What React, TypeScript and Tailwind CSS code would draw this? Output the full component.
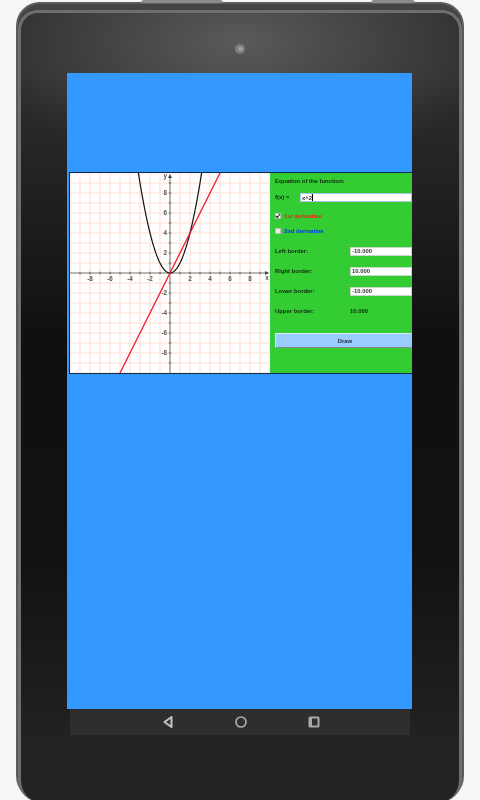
const ticks = Array.from({ length: 21 }, (_, i) => i - 10);
const labels = [-8, -6, -4, -2, 2, 4, 6, 8];

function Graph() {
  const parabola = Array.from({ length: 65 }, (_, i) => {
    const x = -3.2 + i * 0.1;
    return `${100 + x * 10},${100 - x * x * 10}`;
  }).join(" ");

  return (
    <svg viewBox="0 0 200 200" className="block w-[200px] h-[200px] shrink-0 bg-white blur-[0.35px]">
      {ticks.map((t) => (
        <g key={t} stroke="#ffe9e0" strokeWidth={1.6}>
          <line x1={100 + t * 10} y1={0} x2={100 + t * 10} y2={200} />
          <line x1={0} y1={100 + t * 10} x2={200} y2={100 + t * 10} />
        </g>
      ))}
      <line x1={0} y1={100} x2={198} y2={100} stroke="#a8a39f" strokeWidth={1.6} />
      <line x1={100} y1={3} x2={100} y2={200} stroke="#a8a39f" strokeWidth={1.6} />
      {ticks.filter((t) => t !== 0 && Math.abs(t) < 10).map((t) => (
        <g key={t} stroke="#777" strokeWidth={1.4}>
          <line x1={100 + t * 10} y1={98.8} x2={100 + t * 10} y2={101.2} />
          <line x1={98.8} y1={100 + t * 10} x2={101.2} y2={100 + t * 10} />
        </g>
      ))}
      <polygon points="100,1 98,5 102,5" fill="#444" />
      <polygon points="199,100 195,98 195,102" fill="#444" />
      <polyline points={parabola} fill="none" stroke="#111" strokeWidth={1.2} />
      <line x1={50} y1={200} x2={150} y2={0} stroke="#f01020" strokeWidth={1.2} />
      <g fontFamily="'Liberation Sans', sans-serif" fontSize={6.3} fill="#555" fontWeight={700}>
        {labels.map((n) => (
          <text key={n} x={100 + n * 10} y={108} textAnchor="middle">{n}</text>
        ))}
        {labels.map((n) => (
          <text key={n} x={97} y={102 - n * 10} textAnchor="end">{n}</text>
        ))}
        <text x={97} y={5} textAnchor="end">y</text>
        <text x={197} y={107} textAnchor="middle">x</text>
      </g>
    </svg>
  );
}

function BorderRow({ label, value }: { label: string; value: string }) {
  return (
    <div className="flex items-center h-[10px] mb-[10px]">
      <span className="w-[75px] shrink-0 text-[#102810]">{label}</span>
      <div className="flex-1 self-end h-[9px] bg-white border border-[#c8d8c8] pl-[1px] leading-[7px] text-[#333]">
        {value}
      </div>
    </div>
  );
}

function Panel() {
  return (
    <div className="flex-1 min-w-0 bg-[#33cc33] pl-[5px] pt-[3px] text-[5.9px] font-bold leading-[10px] text-[#102810] [font-family:'Liberation_Sans',sans-serif] blur-[0.25px]">
      <div className="h-[10px]">Equation of the function:</div>
      <div className="flex items-center h-[10px] mt-[6px]">
        <span className="w-[25px] shrink-0">f(x) =</span>
        <div className="flex-1 self-end h-[9px] flex items-center bg-white border border-[#a9c4e8] pl-[1px] text-[#333]">
          <span>x^2</span>
          <span className="w-px h-[7px] bg-black" />
        </div>
      </div>
      <div className="flex items-center gap-[3px] h-[10px] mt-[9px] text-[#ff1a1a]">
        <span className="flex items-center justify-center w-[6px] h-[6px] bg-white border border-[#bbb]">
          <svg viewBox="0 0 6 6" className="w-[6px] h-[6px] shrink-0">
            <path d="M1 3l1.3 1.6L5 1" fill="none" stroke="#222" strokeWidth={1.2} />
          </svg>
        </span>
        <span>1st derivative</span>
      </div>
      <div className="flex items-center gap-[3px] h-[10px] mt-[5px] text-[#0a2cff]">
        <span className="w-[6px] h-[6px] bg-[#e8e8e8] border border-[#bbb]" />
        <span>2nd derivative</span>
      </div>
      <div className="mt-[10px]">
        <BorderRow label="Left border:" value="-10.000" />
        <BorderRow label="Right border:" value="10.000" />
        <BorderRow label="Lower border:" value="-10.000" />
        <div className="flex items-center h-[10px]">
          <span className="w-[75px] shrink-0">Upper border:</span>
          <span>10.000</span>
        </div>
      </div>
      <div className="mt-[17px] h-[15px] pl-[3px] bg-[#99ccff] border border-t-[#dbe9f7] border-l-[#dbe9f7] border-r-[#99ccff] border-b-[#888] flex items-center justify-center text-[#1a2a44]">
        Draw
      </div>
    </div>
  );
}

function NavBar() {
  return (
    <div className="ml-[3px] mr-[2px] h-[26px] bg-[#2e2e2e] flex items-center">
      <svg viewBox="0 0 12 14" className="ml-[92px] w-[12px] h-[14px] shrink-0 blur-[0.3px]">
        <path d="M9.5 2v10L2.5 7z" fill="#333" stroke="#c4c4c4" strokeWidth={2} strokeLinejoin="round" />
      </svg>
      <svg viewBox="0 0 14 14" className="ml-[60px] w-[14px] h-[14px] shrink-0 blur-[0.3px]">
        <circle cx={7} cy={7} r={5} fill="none" stroke="#aaa" strokeWidth={1.7} />
      </svg>
      <svg viewBox="0 0 12 14" className="ml-[60px] w-[12px] h-[14px] shrink-0 blur-[0.3px]">
        <rect x={0.5} y={1.5} width={11} height={11} rx={1.5} fill="#a8a8a8" />
        <rect x={4} y={3.5} width={5.5} height={7} fill="#2e2e2e" />
      </svg>
    </div>
  );
}

export default function App() {
  return (
    <div className="w-[480px] h-[800px] overflow-hidden bg-[#f6f6f6]">
      <div className="flex h-[3px]">
        <div className="ml-[141px] w-[82px] h-[3px] bg-[#8a8a8a] rounded-t-sm" />
        <div className="ml-[148px] w-[44px] h-[3px] bg-[#8a8a8a] rounded-t-sm" />
      </div>
      <div className="mx-[16px] h-[798px] -mt-px rounded-t-[24px] rounded-b-[24px] bg-[#444] border-x-[2px] border-t-[2px] border-[#5c5c5c]">
        <div className="h-[792px] mt-[6px] rounded-t-[20px] rounded-b-[22px] border-x-[3px] border-t-[3px] border-[#6e6e6e] bg-[linear-gradient(180deg,transparent_0,transparent_8%,#0f0f0f_42%,#121212_70%,#222_92%,#222_100%),radial-gradient(ellipse_260px_130px_at_50%_30px,#5a5a5a,#2e2e2e)] pt-[31px] pl-[46px] pr-[47px] flex flex-col">
          <div className="ml-[168px] w-[10px] h-[10px] mb-[19px] shrink-0 rounded-full bg-[#7d7d7d] flex items-center justify-center blur-[0.5px]">
            <div className="w-[5px] h-[4px] rounded-full bg-[#a0a0a0]" />
          </div>
          <div className="h-[636px] bg-[#3399ff] w-[345px] shrink-0 flex flex-col">
            <div className="mt-[99px] ml-[2px] h-[202px] border border-[#0a2a50] border-r-0 bg-[#33cc33] flex w-[343px]">
              <Graph />
              <Panel />
            </div>
          </div>
          <NavBar />
        </div>
      </div>
    </div>
  );
}
